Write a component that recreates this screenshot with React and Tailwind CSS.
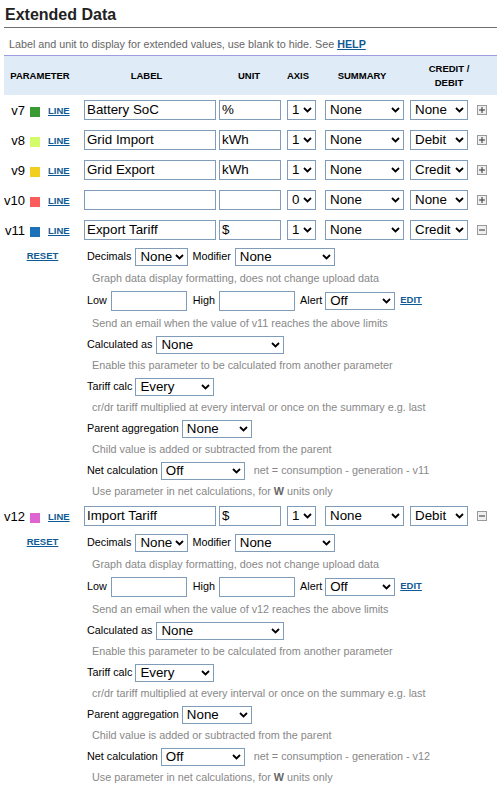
import React from "react";

const Chevron = () => (
  <svg width="9" height="6" viewBox="0 0 9 6" className="shrink-0">
    <path d="M1 1l3.5 3.5L8 1" fill="none" stroke="#000" strokeWidth="1.8" />
  </svg>
);

function Select({ value, className }) {
  return (
    <div
      className={
        "flex items-center justify-between overflow-hidden whitespace-nowrap border border-[#7f9db9] bg-white pl-[4px] pr-[3px] text-[13.33px] leading-none text-black " +
        className
      }
    >
      <span>{value}</span>
      <Chevron />
    </div>
  );
}

function Input({ value, className }) {
  return (
    <div
      className={
        "flex items-center overflow-hidden whitespace-nowrap border border-[#7f9db9] bg-white pl-[2px] text-[13.33px] leading-none text-black " +
        className
      }
    >
      {value}
    </div>
  );
}

function PmButton({ minus }) {
  return (
    <svg width="10" height="10" viewBox="0 0 10 10" className="shrink-0">
      <rect x="0.5" y="0.5" width="9" height="9" fill="#efefef" stroke="#9a9a9a" />
      <path d="M2 5h6" stroke="#333" strokeWidth="1" />
      {!minus && <path d="M5 2v6" stroke="#333" strokeWidth="1" />}
    </svg>
  );
}

const linkCls = "font-bold text-[9.5px] underline text-[#0f5a94]";

function MainRow({ v, color, label, unit, axis, credit, minus }) {
  return (
    <div className="flex h-[30px] items-center">
      <div className="flex w-[80px] items-center">
        <span className="w-[21px] text-right text-[13px] leading-none">{v}</span>
        <span className={"ml-[5px] mt-[3px] h-[10px] w-[10px] " + color}></span>
        <span className={"ml-[8px] mt-[2px] " + linkCls}>LINE</span>
      </div>
      <Input value={label} className="h-[20px] w-[132px]" />
      <Input value={unit} className="ml-[3px] h-[20px] w-[62px]" />
      <Select value={axis} className="ml-[6px] h-[20px] w-[29px]" />
      <Select value="None" className="ml-[9px] h-[20px] w-[79px]" />
      <Select value={credit} className="ml-[6px] -mt-[1px] h-[20px] w-[58px]" />
      <div className="ml-[9px] -mt-[1px]">
        <PmButton minus={minus} />
      </div>
    </div>
  );
}

const lbl = "text-[10.8px] leading-none text-black";
const helpCls = "flex h-[21px] items-center pl-[5px] text-[10.8px] leading-none text-[#888]";

function Expanded({ v }) {
  return (
    <div className="flex">
      <div className="w-[80px] pr-[3px]">
        <div className="flex h-[23px] items-center justify-center">
          <span className={linkCls}>RESET</span>
        </div>
      </div>
      <div className="flex flex-col pl-[3px]">
        <div className="flex h-[23px] items-center">
          <span className={lbl}>Decimals</span>
          <Select value="None" className="ml-[4px] h-[18px] w-[53px]" />
          <span className={"ml-[4px] " + lbl}>Modifier</span>
          <Select value="None" className="ml-[4px] h-[18px] w-[100px]" />
        </div>
        <div className={helpCls}>Graph data display formatting, does not change upload data</div>
        <div className="flex h-[23px] items-center">
          <span className={lbl}>Low</span>
          <Input value="" className="ml-[4px] h-[20px] w-[76px]" />
          <span className={"ml-[6px] " + lbl}>High</span>
          <Input value="" className="ml-[4px] h-[20px] w-[76px]" />
          <span className={"ml-[5px] " + lbl}>Alert</span>
          <Select value="Off" className="ml-[3px] h-[18px] w-[70px]" />
          <span className={"ml-[5px] " + linkCls}>EDIT</span>
        </div>
        <div className={helpCls + " h-[22px]"}>
          Send an email when the value of {v} reaches the above limits
        </div>
        <div className="flex h-[21px] items-center">
          <span className={lbl}>Calculated as</span>
          <Select value="None" className="ml-[4px] h-[18px] w-[128px]" />
        </div>
        <div className={helpCls}>Enable this parameter to be calculated from another parameter</div>
        <div className="flex h-[21px] items-center">
          <span className={lbl}>Tariff calc</span>
          <Select value="Every" className="ml-[3px] h-[18px] w-[79px]" />
        </div>
        <div className={helpCls}>cr/dr tariff multiplied at every interval or once on the summary e.g. last</div>
        <div className="flex h-[21px] items-center">
          <span className={lbl}>Parent aggregation</span>
          <Select value="None" className="ml-[3px] h-[18px] w-[70px]" />
        </div>
        <div className={helpCls}>Child value is added or subtracted from the parent</div>
        <div className="flex h-[21px] items-center">
          <span className={lbl}>Net calculation</span>
          <Select value="Off" className="ml-[3px] h-[18px] w-[84px]" />
          <span className="ml-[9px] text-[10.8px] leading-none text-[#888]">
            net = consumption - generation - {v}
          </span>
        </div>
        <div className={helpCls + " !h-[20px]"}>
          <span>
            Use parameter in net calculations, for <b className="text-[#666]">W</b> units only
          </span>
        </div>
      </div>
    </div>
  );
}

export default function App() {
  return (
    <div className="w-[497px] overflow-hidden bg-white pl-[4px] font-['Liberation_Sans',Arial,sans-serif] text-black">
      <h2 className="mt-[6px] border-b border-[#6f6f6f] pb-[3px] pl-[1px] text-[16px] font-bold leading-[18px] text-[#222]">
        Extended Data
      </h2>
      <div className="flex h-[27px] items-center pl-[5px] pt-[5px] text-[10.75px] leading-none text-[#666]">
        <span>
          Label and unit to display for extended values, use blank to hide. See{" "}
          <span className="font-bold text-[#0f5a94] underline">HELP</span>
        </span>
      </div>
      <div className="flex h-[40px] items-center border-t border-[#9d9ddf] bg-[#dfebf7] text-[9.5px] font-bold leading-[14px] text-black">
        <div className="w-[72px] text-center">PARAMETER</div>
        <div className="w-[141px] text-center">LABEL</div>
        <div className="w-[64px] text-center">UNIT</div>
        <div className="w-[34px] text-center">AXIS</div>
        <div className="w-[94px] text-center">SUMMARY</div>
        <div className="w-[80px] text-center">
          CREDIT /<br />DEBIT
        </div>
      </div>
      <MainRow v="v7" color="bg-[#3a9b35]" label="Battery SoC" unit="%" axis="1" credit="None" />
      <MainRow v="v8" color="bg-[#d4fc6a]" label="Grid Import" unit="kWh" axis="1" credit="Debit" />
      <MainRow v="v9" color="bg-[#f2cf1f]" label="Grid Export" unit="kWh" axis="1" credit="Credit" />
      <MainRow v="v10" color="bg-[#fd5c5c]" label="" unit="" axis="0" credit="None" />
      <MainRow v="v11" color="bg-[#1b72b8]" label="Export Tariff" unit="$" axis="1" credit="Credit" minus />
      <Expanded v="v11" />
      <MainRow v="v12" color="bg-[#de64d2]" label="Import Tariff" unit="$" axis="1" credit="Debit" minus />
      <Expanded v="v12" />
    </div>
  );
}
